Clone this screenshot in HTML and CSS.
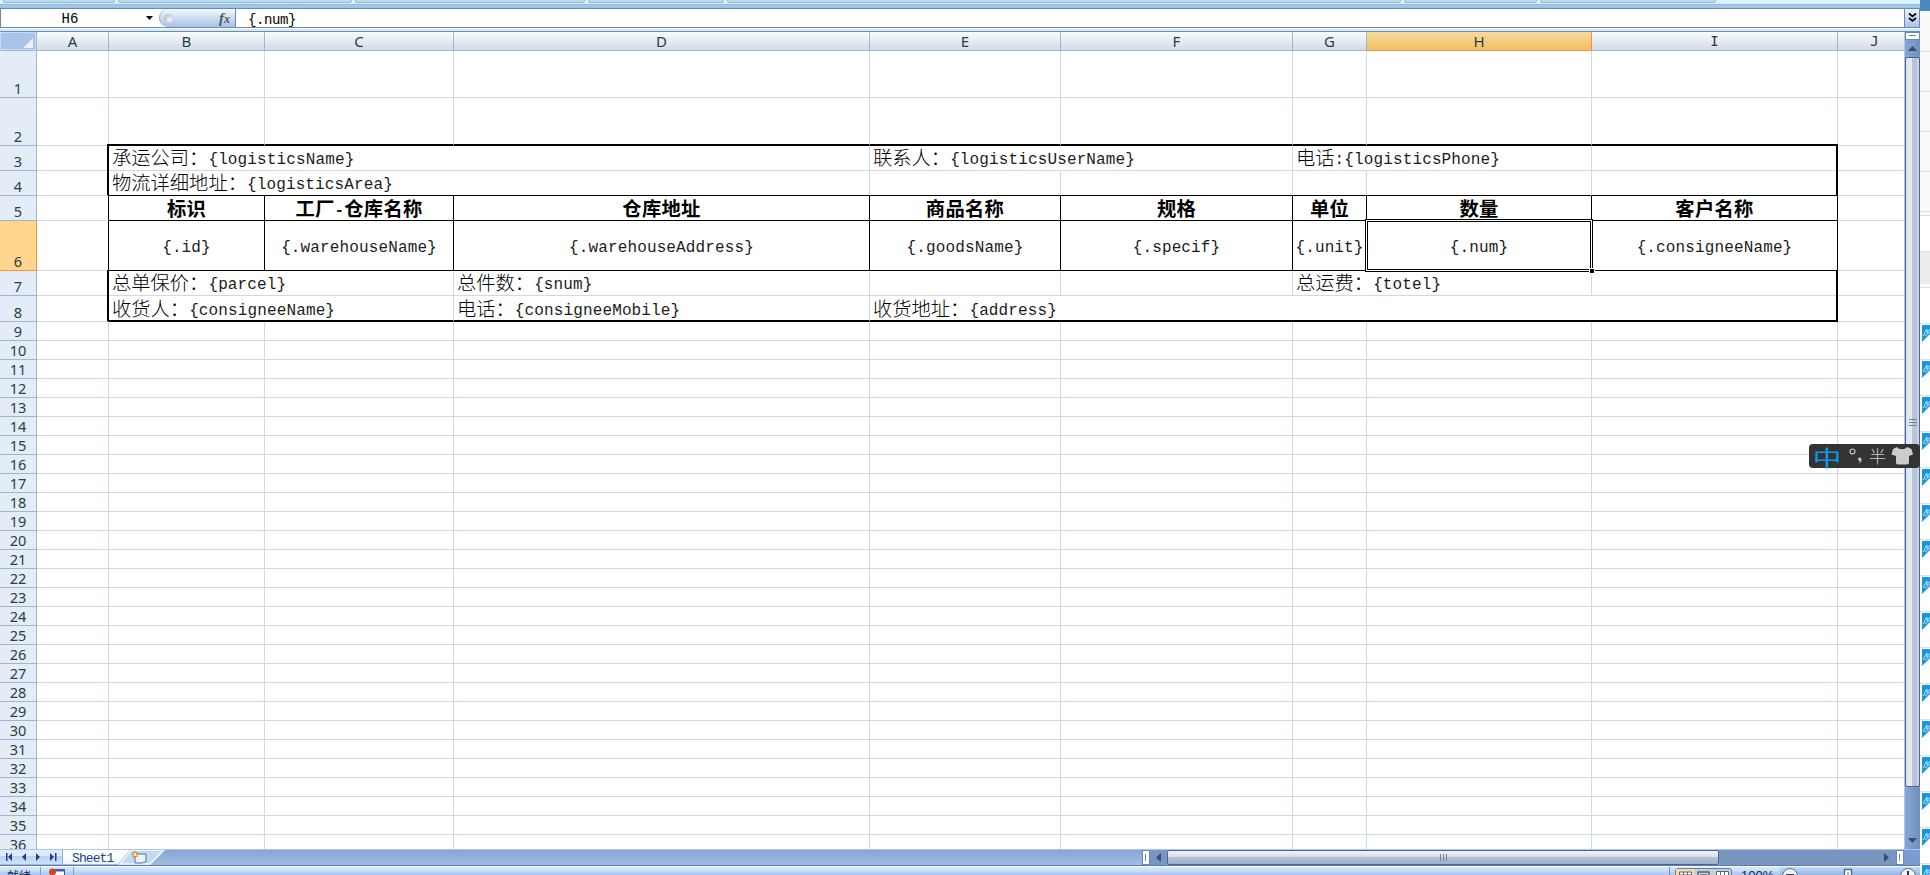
FILE: index.html
```
<!DOCTYPE html>
<html lang="zh-CN">
<head>
    <meta charset="UTF-8">
    <title>Sheet1</title>
    <link rel="stylesheet" href="styles.css">
</head>
<body>
    <div class="window">
        <div class="ribbon">
            <div class="group"></div><div class="group"></div><div class="group"></div><div class="group"></div>
            <div class="group"></div><div class="group"></div><div class="group"></div>
        </div>
        <div class="formula-bar">
            <div class="name-box"><span>H6</span><svg class="drop" width="7" height="4"><path d="M0 0h7L3.500 4z"/></svg></div>
            <div class="fx"><i class="dot"></i><em>f<small>x</small></em></div>
            <div class="formula">{.num}</div>
            <div class="expand">
                <svg width="15" height="17" fill="none" stroke="#000" stroke-width="1.700"><path d="M4 4.500l3.500 3 3.500-3M4 9l3.500 3 3.500-3"/></svg>
            </div>
        </div>
        <div class="bar-gap"></div>
        <div class="main">
            <div class="sheet" id="sheet">
                <div class="row head">
                    <div class="corner"><svg width="10" height="10"><path d="M10 0v10H0z" fill="#eef2f8"/></svg></div>
                    <div>A</div><div>B</div><div>C</div><div>D</div><div>E</div><div>F</div><div>G</div>
                    <div class="active">H</div><div class="slab">I</div><div class="slab last">J</div>
                </div>
                <div class="row r1"><div class="num">1</div><div></div><div></div><div></div><div></div><div></div><div></div><div></div><div></div><div></div><div></div></div>
                <div class="row r2"><div class="num">2</div><div></div><div></div><div></div><div></div><div></div><div></div><div></div><div></div><div></div><div></div></div>
                <div class="row r3">
                    <div class="num">3</div><div class="edge"></div>
                    <div class="span3">承运公司：<span>{logisticsName}</span></div>
                    <div class="span2">联系人：<span>{logisticsUserName}</span></div>
                    <div class="span2">电话<span>:{logisticsPhone}</span></div>
                    <div class="edge"></div><div></div>
                </div>
                <div class="row r4">
                    <div class="num">4</div><div class="edge"></div>
                    <div class="span3">物流详细地址：<span>{logisticsArea}</span></div>
                    <div></div><div></div><div></div><div></div><div class="edge"></div><div></div>
                </div>
                <div class="row r5">
                    <div class="num">5</div><div class="thin"></div>
                    <div>标识</div><div>工厂<span>-</span>仓库名称</div><div>仓库地址</div><div>商品名称</div><div>规格</div><div>单位</div><div>数量</div><div>客户名称</div><div></div>
                </div>
                <div class="row r6">
                    <div class="num active">6</div><div class="thin"></div>
                    <div><span>{.id}</span></div><div><span>{.warehouseName}</span></div><div><span>{.warehouseAddress}</span></div><div><span>{.goodsName}</span></div><div><span>{.specif}</span></div><div><span>{.unit}</span></div>
                    <div class="selected"><span>{.num}</span><b class="cursor"></b><b class="handle"></b></div>
                    <div><span>{.consigneeName}</span></div><div></div>
                </div>
                <div class="row r7">
                    <div class="num">7</div><div class="edge"></div>
                    <div class="span2">总单保价：<span>{parcel}</span></div>
                    <div>总件数：<span>{snum}</span></div>
                    <div></div><div></div>
                    <div class="span2">总运费：<span>{totel}</span></div>
                    <div class="edge"></div><div></div>
                </div>
                <div class="row r8">
                    <div class="num">8</div><div class="edge"></div>
                    <div class="span2">收货人：<span>{consigneeName}</span></div>
                    <div>电话：<span>{consigneeMobile}</span></div>
                    <div class="span5 edge">收货地址：<span>{address}</span></div><div></div>
                </div>
            </div>
            <div class="vscroll">
                <div class="vsplit"></div>
                <div class="varrow"><svg width="9" height="5"><path d="M4.500 0L9 5H0z"/></svg></div>
                <div class="vthumb"><i></i><i></i><i></i></div>
                <div class="vtrack"><svg width="9" height="5"><path d="M0 0h9L4.500 5z"/></svg></div>
            </div>
        </div>
        <div class="tabs">
            <div class="nav">
                <svg width="62" height="14" fill="#15428b"><path d="M6 3h1.500v8H6zM12 3v8L8 7zM26 3v8l-4-4zM36 3v8l4-4zM50 3v8l4-4zM55 3h1.500v8H55z"/></svg>
            </div>
            <div class="tab">Sheet1</div>
            <svg class="newtab" width="54" height="15">
                <path d="M0 0H12L0 14z" fill="#fff"/>
                <path d="M13.500 0H46L32 14H2z" fill="#c3daf5" stroke="#f3f8fe" stroke-width="1.500"/>
                <path d="M17 4h11v8h-2l-2 1h-7z" fill="#eef2fa" stroke="#5b6fa5"/>
                <path d="M17 1v7M13.500 4.500h7M14.500 2l5 5M19.500 2l-5 5" stroke="#d78a18" stroke-width="1.200"/>
                <circle cx="17" cy="4.500" r="1.500" fill="#fff3b0"/>
            </svg>
            <div class="tabspace"></div>
            <div class="hsplit"></div>
            <div class="harrow"><svg width="5" height="9"><path d="M5 0v9L0 4.500z"/></svg></div>
            <div class="hthumb"><i></i><i></i><i></i></div>
            <div class="htrack"><svg width="5" height="9"><path d="M0 0v9l5-4.500z"/></svg></div>
            <div class="hsplit"></div>
            <div class="hcorner"></div>
        </div>
        <div class="status">
            <div class="ready">就绪</div>
            <div class="macro"><svg width="16" height="8"><path d="M4.500 1.500h11V8h-11z" fill="#fff" stroke="#2b55b5"/><path d="M4 1h12v2.500H4z" fill="#2f62cf"/><circle cx="3.500" cy="4" r="3.500" fill="#d0462a"/></svg></div>
            <div class="status-space"></div>
            <div class="views">
                <div class="on"><svg width="13" height="6" fill="#fff" stroke="#666"><path d="M.5 7V1h12v6M.5 4h12M4.500 1v6M8.500 1v6"/></svg></div>
                <div><svg width="13" height="6" fill="none" stroke="#666" stroke-width="1.500"><path d="M1 6V1h11v5M4 6V4h5v2"/></svg></div>
                <div><svg width="13" height="6" fill="#fff" stroke="#666"><path d="M.5 7V.5h12V7zM4.500 0v7M8.500 0v7"/></svg></div>
            </div>
            <div class="percent">100%</div>
            <svg class="zoom" width="140" height="9">
                <circle cx="10" cy="9" r="7.500" fill="#eef4fc" stroke="#5a6b8c"/>
                <path d="M6 8h8" stroke="#445" stroke-width="2"/>
                <path d="M64.500 9V2.500h7V9" fill="#fff" stroke="#4a6797" stroke-width="1.300"/>
                <path d="M68 5v4" stroke="#4a6797"/>
                <circle cx="128" cy="9" r="7.500" fill="#eef4fc" stroke="#5a6b8c"/>
                <path d="M128 4v5" stroke="#334" stroke-width="2"/>
            </svg>
        </div>
    </div>
    <div class="behind" id="behind">
        <div class="b-title"></div>
        <div class="b-line h41"></div><div class="b-line h40"></div><div class="b-line h40"></div><div class="b-line h40"></div><div class="b-line h40"></div>
        <div class="b-line h4"></div><div class="b-line h36 white"></div><div class="b-line h36 band"></div><div class="b-line h36 white"></div>
    </div>
    <div class="ime">
        <span class="zh">中</span>
        <svg width="16" height="18"><circle cx="4.500" cy="4.500" r="2.500" fill="none" stroke="#ccc" stroke-width="1.200"/><path d="M11 10.500c3-.5 4 4-.5 6 1-1.500 1.500-2 1-3-1.500 0-2-2-.5-3z" fill="#ccc"/></svg>
        <span class="half">半</span>
        <svg width="22" height="18"><path d="M6 0c2 3 8 3 10 0l4.500 2L22 7.500l-4 1.500v6.500q0 2-2 2H7q-2 0-2-2V9L.5 7.500 2 2z" fill="#ccc"/></svg>
    </div>
    <script>
        // empty rows below the filled area
        const sheet = document.getElementById('sheet');
        for (let n = 9; n <= 36; n++) {
            const row = document.createElement('div');
            row.className = 'row';
            row.innerHTML = '<div class="num">' + n + '</div>' + '<div></div>'.repeat(10);
            sheet.appendChild(row);
        }

        // list items in the window behind
        const behind = document.getElementById('behind');
        for (let i = 0; i < 16; i++) {
            const item = document.createElement('div');
            item.className = 'b-item';
            item.innerHTML = '<svg width="8" height="17"><path d="M0 0h8v9L0 17z" fill="#1797dc"/><path d="M1 11l4-7 0 4 3-4M3 11l5-4" stroke="#bfe4f8" fill="none"/></svg>';
            behind.appendChild(item);
        }
    </script>
</body>
</html>
```
FILE: styles.css
```
* {
    box-sizing: border-box;
}
body {
    margin: 0;
    width: 1930px;
    height: 875px;
    overflow: hidden;
    display: flex;
    background-color: #fff;
    font-family: "Noto Sans CJK SC", sans-serif;
    color: #000;
}
svg {
    display: block;
    flex: none;
}
.window {
    width: 1920px;
    height: 875px;
    display: flex;
    flex-direction: column;
    overflow: hidden;
}

/* ribbon and formula bar */
.ribbon {
    height: 9px;
    flex: none;
    display: grid;
    grid-template-columns: 112px 234px 230px 136px 674px 133px 176px;
    column-gap: 3px;
    padding-left: 3px;
    align-items: start;
    background: linear-gradient(#e0f2ff 0, #e0f2ff 3px, #c4f2fb 3px, #c4f2fb 4px, #8cc4dc 4px, #8cc4dc 5px, #abc6e8 5px, #a3bfe2 8px, #668cb3 8px);
}
.group {
    height: 3px;
    background-color: #c1daf1;
    border: 1px solid #95b9dd;
    border-top: 0;
    border-radius: 0 0 3px 3px;
}
.formula-bar {
    height: 19px;
    flex: none;
    display: flex;
    border-bottom: 1px solid #668cb3;
    background-color: #fff;
    font-family: "Liberation Mono", monospace;
    font-size: 14px;
    line-height: 20px;
}
.name-box {
    width: 159px;
    display: flex;
    align-items: center;
    border-left: 1px solid #668cb3;
}
.name-box span {
    width: 138px;
    padding-top: 2px;
    text-align: center;
    margin-right: 7px;
}
.fx {
    width: 77px;
    display: flex;
    align-items: center;
    justify-content: space-between;
    padding: 0 5px 0 4px;
    border: solid #8fadd0;
    border-right-color: #668cb3;
    border-width: 0 1px 0 1px;
    border-radius: 9px 0 0 9px;
    background: linear-gradient(#f4f8fd, #a6c2e6);
}
.dot {
    width: 9px;
    height: 9px;
    border-radius: 50%;
    background: radial-gradient(circle at 65% 65%, #f3f5f8, #a7b0bd);
}
.fx em {
    font: italic bold 15px/18px "Liberation Serif", serif;
    color: #505860;
}
.fx small {
    font-size: 12px;
}
.formula {
    flex: 1;
    padding: 1px 0 0 12px;
    font-size: 14px;
    letter-spacing: -.4px;
}
.expand {
    width: 16px;
    border: solid #668cb3;
    border-width: 0 1px;
    background: linear-gradient(#eef4fc, #a9c4e8);
}
.bar-gap {
    height: 4px;
    flex: none;
    background: linear-gradient(#fff 1px, #d9e8f8 1px, #d9e8f8 3px, #668cb3 3px);
}

/* cells */
.main {
    height: 817px;
    flex: none;
    display: flex;
}
.sheet {
    width: 1904px;
    overflow: hidden;
}
.row {
    display: grid;
    grid-template-columns: 37px 72px 156px 189px 416px 191px 232px 74px 225px 246px 66px;
    grid-template-rows: 100%;
    height: 19px;
    font-size: 19.300px;
    font-weight: 300;
    line-height: 22px;
}
.row > div {
    border-right: 1px solid #d0d7e5;
    border-bottom: 1px solid #d0d7e5;
    white-space: nowrap;
    min-width: 0;
}
.row > div:last-child {
    border-right: 0;
}
.row span {
    font-family: "Liberation Mono", monospace;
    font-size: 16px;
    line-height: 1;
    letter-spacing: .13px;
    vertical-align: 1px;
    color: #1c1c1c;
}
.row > .num {
    display: flex;
    align-items: flex-end;
    justify-content: center;
    background-color: #e4ecf7;
    border-color: #9eb6ce;
    font: 14.500px/18px "Noto Sans", sans-serif;
    color: #27413e;
}
.row > .num.active {
    background-color: #ffd58d;
    border-color: #f29536;
}
.head > div {
    text-align: center;
    font: 15px/18px "Noto Sans", sans-serif;
    color: #27413e;
    background: linear-gradient(#f9fcfd, #d3dbe9);
    border-color: #9eb6ce;
}
.head > .slab {
    font-family: "DejaVu Sans Mono", monospace;
    font-size: 14px;
}
.head > .last {
    padding-left: 7px;
}
.head > .active {
    background: linear-gradient(#f9d99f, #f1c15f);
    border-color: #f29536;
}
.head > .corner {
    display: flex;
    align-items: flex-end;
    justify-content: flex-end;
    padding: 0 3px 2px 0;
    background: #a9c4e9;
    box-shadow: inset 0 0 0 1px #c8daf2;
}
.r1 {
    height: 47px;
}
.r2 {
    height: 48px;
}
.r3, .r4, .r5, .r7 {
    height: 25px;
}
.r6 {
    height: 50px;
}
.r8 {
    height: 26px;
}
.r3 > div, .r4 > div, .r7 > div, .r8 > div {
    padding-left: 3px;
    line-height: 23px;
}
.row > .num {
    padding-left: 0;
    line-height: 17px;
}
.r2 > div:nth-child(n+3):nth-child(-n+10) {
    border-bottom: 2px solid #000;
}
.row .span2 {
    grid-column: span 2;
}
.row .span3 {
    grid-column: span 3;
}
.row .span5 {
    grid-column: span 5;
}
/* starts over the line above, so the frame has no gaps */
.row > .edge {
    margin-top: -1px;
    padding-top: 1px;
    border-right: 2px solid #000;
}
.r3 > .edge {
    margin-top: -2px;
}
.row > .thin {
    border-right-color: #000;
}
.r4 > div:nth-child(n+3):nth-child(-n+8),
.r5 > div:nth-child(n+3):nth-child(-n+10),
.r6 > div:nth-child(n+3):nth-child(-n+10) {
    border-bottom-color: #000;
}
.r5 > div:nth-child(n+3):nth-child(-n+10),
.r6 > div:nth-child(n+3):nth-child(-n+10) {
    border-right-color: #000;
    text-align: center;
}
.r5 {
    font-weight: bold;
    line-height: 25px;
    letter-spacing: .3px;
}
.r6 {
    line-height: 48px;
}
.r8 > div {
    line-height: 24px;
}
.r8 > div:nth-child(n+3):nth-child(-n+5) {
    border-bottom: 2px solid #000;
}
.selected {
    position: relative;
}
.cursor {
    position: absolute;
    inset: -2px;
    border: 1px solid #000;
    box-shadow: inset 0 0 0 1px #fff, inset 0 0 0 2px #000;
}
.handle {
    position: absolute;
    right: -4px;
    bottom: -4px;
    width: 6px;
    height: 6px;
    background-color: #000;
    border: 1px solid #fff;
    z-index: 2;
}

/* scroll bars */
.vscroll {
    width: 16px;
    display: flex;
    flex-direction: column;
    border-left: 1px solid #a9c8ef;
    background-color: #7896c4;
}
.vsplit {
    height: 8px;
    border: 1px solid #668cb3;
    background: linear-gradient(#6a8bc0, #6a8bc0) 3px 2px / 7px 1px no-repeat #fff;
}
.varrow {
    height: 17px;
    display: flex;
    align-items: center;
    justify-content: center;
    background: linear-gradient(90deg, #87a6d2, #6f90bf);
    fill: #3f4a72;
}
.vthumb {
    height: 730px;
    display: flex;
    flex-direction: column;
    justify-content: center;
    align-items: center;
    gap: 2px;
    border: 1px solid #52638f;
    border-radius: 2px;
    background: linear-gradient(90deg, #dfe4ec 0, #e6ebf1 6px, #b8c6da 6px, #b4c4da 10px, #d3dde9 13px);
}
.vthumb i {
    width: 8px;
    height: 1px;
    background-color: #76829b;
}
.vtrack {
    flex: 1;
    display: flex;
    justify-content: center;
    align-items: flex-end;
    padding-bottom: 6px;
    background: linear-gradient(90deg, #87a6d2, #6f90bf);
    fill: #3f4a72;
}
.tabs {
    height: 17px;
    flex: none;
    display: flex;
    border-top: 1px solid #a9c8ef;
    border-bottom: 1px solid #567bb0;
    background: linear-gradient(#86a5d4, #a3bde2);
}
.nav {
    width: 63px;
    height: 14px;
    background: linear-gradient(#dfebfa 45%, #b9d2f3 45%, #cfe1f8);
    border-right: 1px solid #8fadd6;
}
.tab {
    width: 55px;
    height: 14px;
    background: linear-gradient(#fff 40%, #eef4fc);
    padding-left: 9px;
    font: 13px/17px "Liberation Mono", monospace;
    letter-spacing: -.9px;
    color: #15428b;
}
.tabspace {
    flex: 1;
}
.hsplit {
    width: 8px;
    border: 1px solid #668cb3;
    background: linear-gradient(#6a8bc0, #6a8bc0) 2px 3px / 1px 7px no-repeat #fff;
}
.harrow {
    width: 17px;
    display: flex;
    align-items: center;
    justify-content: center;
    background-color: #7896c4;
    fill: #3f4a72;
}
.hthumb {
    width: 552px;
    display: flex;
    justify-content: center;
    align-items: center;
    gap: 2px;
    border: 1px solid #52638f;
    border-radius: 2px;
    background: linear-gradient(#f0f2f8 0, #d9dde9 6px, #b6c3d6 6px, #9fb0c8);
}
.hthumb i {
    width: 1px;
    height: 7px;
    background-color: #76829b;
}
.htrack {
    width: 177px;
    display: flex;
    align-items: center;
    justify-content: flex-end;
    padding-right: 7px;
    background-color: #7896c0;
    fill: #3f4a72;
}
.hcorner {
    width: 16px;
    background-color: #7b9bd3;
}

/* status bar */
.status {
    height: 9px;
    flex: none;
    display: flex;
    overflow: hidden;
    border-top: 1px solid #fff;
    background: linear-gradient(#d9e8fb 0, #c1d9f8 5px, #aecbf4 6px);
}
.ready {
    width: 41px;
    height: 9px;
    overflow: hidden;
    padding-left: 7px;
    border-right: 1px solid #7f9fcb;
    font-size: 12px;
    line-height: 17px;
    color: #15284b;
}
.macro {
    width: 33px;
    padding: 1px 0 0 8px;
    border-right: 1px solid #7f9fcb;
}
.status-space {
    flex: 1;
    border-right: 1px solid #6d8fc0;
}
.views {
    width: 57px;
    height: 12px;
    margin: 1px 0 0 5px;
    display: flex;
    border: 1px solid #5f80b2;
    border-radius: 3px 3px 0 0;
    background-color: #c6cfdc;
}
.views div {
    width: 19px;
    padding: 2px 0 0 3px;
}
.views .on {
    background-color: #fbd9a5;
}
.percent {
    width: 48px;
    height: 9px;
    overflow: hidden;
    padding-left: 9px;
    font: 13px/17px "Liberation Sans", sans-serif;
    color: #15284b;
}
.zoom {
    background: linear-gradient(#c3daf8, #8db2e6);
}

/* window behind */
.behind {
    width: 10px;
    height: 875px;
    overflow: hidden;
    background-color: #f9f9f9;
}
.b-title {
    height: 11px;
    background-color: #4a89c0;
}
.b-line {
    border-bottom: 1px solid #dedede;
}
.h41 {
    height: 41px;
}
.h40 {
    height: 40px;
}
.h4 {
    height: 4px;
}
.h36 {
    height: 36px;
}
.white, .b-item {
    background-color: #fff;
}
.band {
    background: linear-gradient(#ececec 32px, #fff 32px);
}
.b-item {
    height: 36px;
    padding: 1px 0 0 2px;
    border-bottom: 1px solid #dedede;
}

/* input method bar floats over the sheet */
.ime {
    position: absolute;
    left: 1809px;
    top: 444px;
    width: 111px;
    height: 24px;
    display: flex;
    align-items: center;
    padding: 0 5px 0 7px;
    border-radius: 4px;
    background-color: #333;
    color: #ccc;
    line-height: 24px;
    gap: 5px;
}
.zh {
    width: 22px;
    text-align: center;
    font-size: 22px;
    color: #0b9ae8;
    transform: scaleX(1.300);
    margin-right: 5px;
}
.half {
    width: 17px;
    font-size: 17px;
    font-weight: 300;
}
```
